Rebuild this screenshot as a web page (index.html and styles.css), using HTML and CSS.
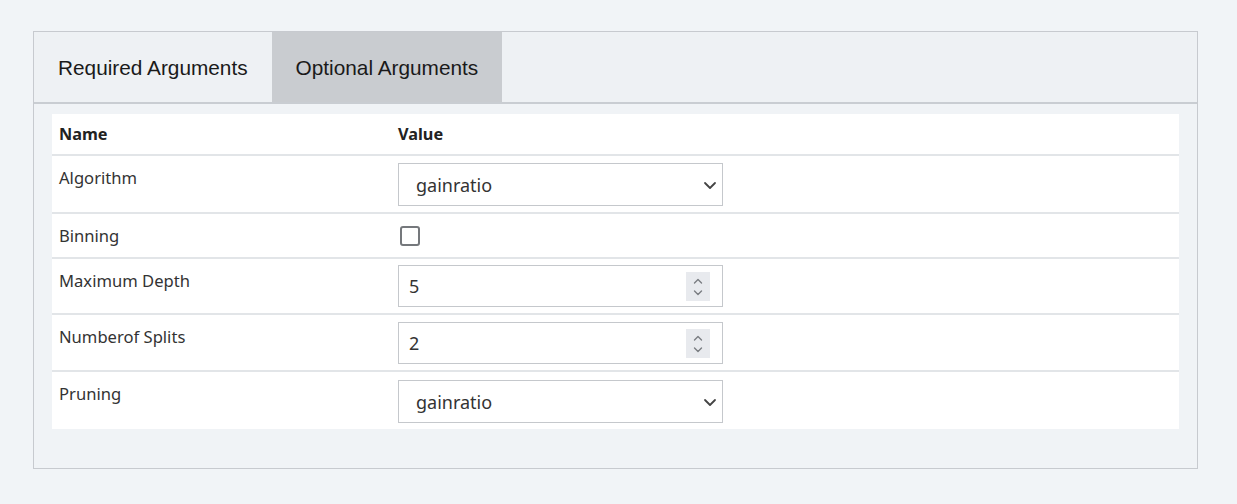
FILE: index.html
```html
<!DOCTYPE html>
<html>
<head>
<meta charset="utf-8">
<link rel="stylesheet" href="styles.css">
</head>
<body>
<div class="panel">
  <div class="tabs">
    <div class="tab">Required Arguments</div>
    <div class="tab active">Optional Arguments</div>
  </div>
  <div class="body">
    <div class="table">
      <div class="row head">
        <div class="label">Name</div>
        <div class="value-h">Value</div>
      </div>
      <div class="row">
        <div class="label">Algorithm</div>
        <div class="value">
          <div class="field select">
            <span class="ftext sel">gainratio</span>
            <svg class="chev" width="14" height="9" viewBox="0 0 14 9"><path d="M2 2 L7 7 L12 2" fill="none" stroke="#444" stroke-width="1.8" stroke-linecap="round" stroke-linejoin="round"/></svg>
          </div>
        </div>
      </div>
      <div class="row">
        <div class="label">Binning</div>
        <div class="value check-cell"><span class="checkbox"></span></div>
      </div>
      <div class="row">
        <div class="label">Maximum Depth</div>
        <div class="value">
          <div class="field num">
            <span class="ftext">5</span>
            <span class="spin"><svg width="12" height="22" viewBox="0 0 12 22"><path d="M2.5 7 L6 3.5 L9.5 7" fill="none" stroke="#7a7d82" stroke-width="1.4" stroke-linecap="round" stroke-linejoin="round"/><path d="M2.5 15 L6 18.5 L9.5 15" fill="none" stroke="#7a7d82" stroke-width="1.4" stroke-linecap="round" stroke-linejoin="round"/></svg></span>
          </div>
        </div>
      </div>
      <div class="row">
        <div class="label">Numberof Splits</div>
        <div class="value">
          <div class="field num">
            <span class="ftext">2</span>
            <span class="spin"><svg width="12" height="22" viewBox="0 0 12 22"><path d="M2.5 7 L6 3.5 L9.5 7" fill="none" stroke="#7a7d82" stroke-width="1.4" stroke-linecap="round" stroke-linejoin="round"/><path d="M2.5 15 L6 18.5 L9.5 15" fill="none" stroke="#7a7d82" stroke-width="1.4" stroke-linecap="round" stroke-linejoin="round"/></svg></span>
          </div>
        </div>
      </div>
      <div class="row last">
        <div class="label">Pruning</div>
        <div class="value">
          <div class="field select">
            <span class="ftext sel">gainratio</span>
            <svg class="chev" width="14" height="9" viewBox="0 0 14 9"><path d="M2 2 L7 7 L12 2" fill="none" stroke="#444" stroke-width="1.8" stroke-linecap="round" stroke-linejoin="round"/></svg>
          </div>
        </div>
      </div>
    </div>
  </div>
</div>
</body>
</html>
```

FILE: styles.css
```css
html, body {
  margin: 0;
  padding: 0;
}
body {
  background: #f1f4f7;
  width: 1237px;
  height: 504px;
  overflow: hidden;
  padding: 31px 0 0 33px;
  box-sizing: border-box;
  font-family: "Noto Sans", "Open Sans", sans-serif;
  color: #333;
}
.panel {
  width: 1165px;
  height: 438px;
  box-sizing: border-box;
  border: 1px solid #c7cacf;
  background: #f0f3f6;
  display: flex;
  flex-direction: column;
}
.tabs {
  display: flex;
  height: 72px;
  box-sizing: border-box;
  background: #eef1f4;
  border-bottom: 2px solid #c9cdd2;
}
.tab {
  padding: 1px 24px 0 24px;
  display: flex;
  align-items: center;
  font-family: "Liberation Sans", Arial, sans-serif;
  font-size: 20.8px;
  color: #1a1a1a;
}
.tab.active {
  background: #c9ccd0;
}
.body {
  padding: 10px 18px 0 18px;
}
.table {
  background: #fff;
  height: 315px;
  display: flex;
  flex-direction: column;
}
.row {
  display: grid;
  grid-template-columns: 346px 1fr;
  border-bottom: 2px solid #e2e5e8;
  box-sizing: border-box;
}
.row.last {
  border-bottom: none;
}
.row.head {
  height: 42px;
  align-items: center;
}
.row.head .label,
.row.head .value-h {
  font-weight: 700;
  font-size: 16.3px;
  color: #222;
  padding: 0;
}
.row.head .label {
  padding-left: 7px;
}
.label {
  padding: 11px 7px 0 7px;
  font-size: 16.6px;
  line-height: 22px;
}
.value {
  padding: 7px 0 7px 0;
}
.row:nth-child(2) .value { padding: 7px 0 6px; }
.row:nth-child(4) .value { padding: 6px 0 6px; }
.row:nth-child(5) .value { padding: 7px 0 6px; }
.row.last .value { padding: 8px 0 6px; }
.check-cell {
  padding: 12px 0 11px 2px;
}
.checkbox {
  display: block;
  width: 20px;
  height: 20px;
  box-sizing: border-box;
  border: 2px solid #75787c;
  border-radius: 3px;
  background: #fff;
}
.field {
  position: relative;
  width: 325px;
  height: 43px;
  box-sizing: border-box;
  border: 1px solid #c5c8cc;
  background: #fff;
  display: flex;
  align-items: center;
}
.field.num {
  height: 42px;
}
.ftext {
  font-size: 18px;
  color: #333;
  padding-left: 10px;
}
.ftext.sel {
  padding-left: 17px;
}
.chev {
  position: absolute;
  right: 5px;
  top: 17px;
}
.spin {
  position: absolute;
  right: 12px;
  top: 6px;
  width: 24px;
  height: 29px;
  background: #e8eaee;
  display: flex;
  align-items: center;
  justify-content: center;
}
```
